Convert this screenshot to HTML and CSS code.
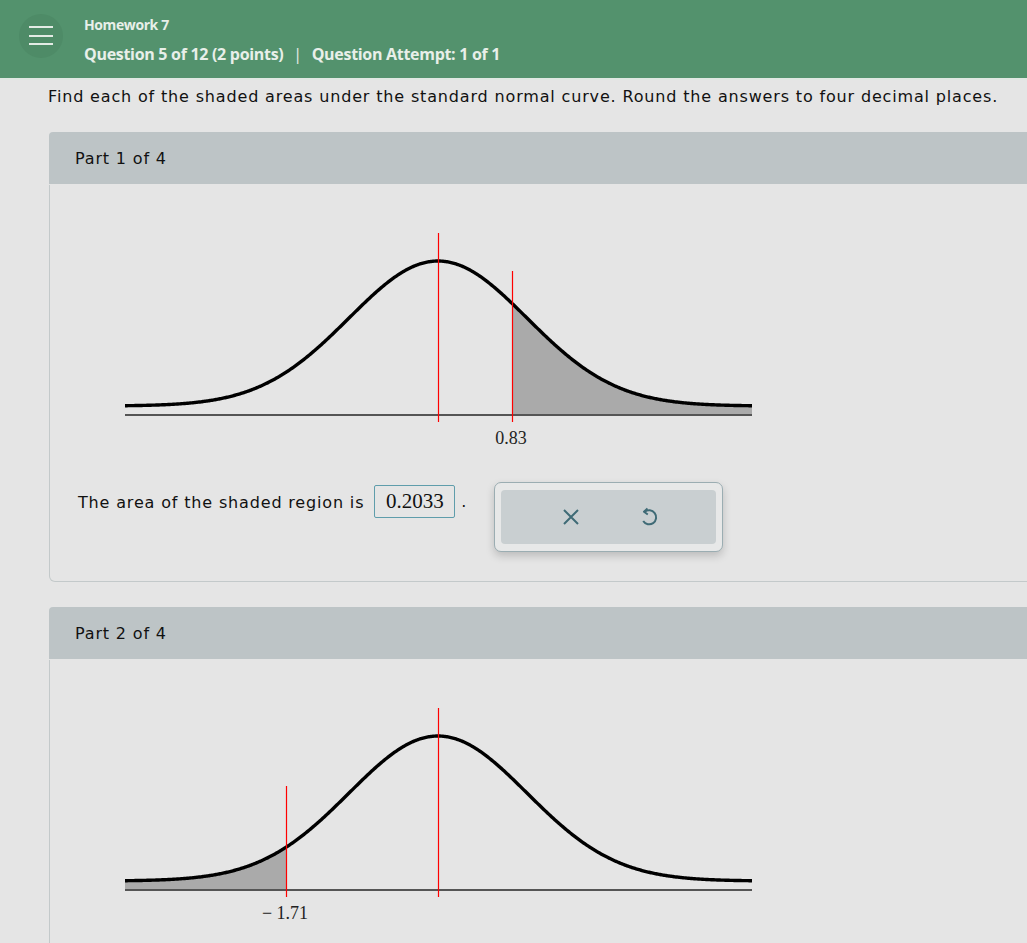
FILE: index.html
```html
<!DOCTYPE html>
<html lang="en">
<head>
    <title>Homework 7</title>
    <link rel="stylesheet" href="styles.css">
</head>
<body>
    <div class="top-bar">
        <button class="menu-button">
            <span class="menu-line"></span>
            <span class="menu-line"></span>
            <span class="menu-line"></span>
        </button>
        <div class="title-area">
            <div class="hw-name">Homework 7</div>
            <div class="question-info">Question 5 of 12 (2 points) <span class="divider">|</span> Question Attempt: 1 of 1</div>
        </div>
    </div>

    <div class="content">
        <p class="question-text">Find each of the shaded areas under the standard normal curve. Round the answers to four decimal places.</p>

        <div class="part-card">
            <div class="part-header">Part 1 of 4</div>
            <div class="part-body">
                <svg class="graph" width="760" height="270" id="graph1" data-z="0.83" data-side="right" data-line-top="86"></svg>
                <div class="answer-row">
                    <span class="answer-label">The area of the shaded region is</span>
                    <span class="answer-box">0.2033</span>
                    <span class="answer-dot">.</span>
                    <div class="tool-box">
                        <div class="tool-inner">
                            <svg width="20" height="20" viewBox="0 0 20 20">
                                <path d="M3 3 L17 17 M17 3 L3 17" stroke="#3f6b76" stroke-width="2" fill="none"/>
                            </svg>
                            <svg width="20" height="22" viewBox="0 0 20 22">
                                <path d="M8.5 2.5 L5 5.8 L8.8 8.5" stroke="#3f6b76" stroke-width="2" fill="none" stroke-linejoin="round"/>
                                <path d="M5.6 6 A7 7 0 1 1 4.2 15" stroke="#3f6b76" stroke-width="2" fill="none"/>
                            </svg>
                        </div>
                    </div>
                </div>
            </div>
        </div>

        <div class="part-card">
            <div class="part-header">Part 2 of 4</div>
            <div class="part-body">
                <svg class="graph" width="760" height="270" id="graph2" data-z="-1.71" data-side="left" data-line-top="126"></svg>
            </div>
        </div>
    </div>

    <script>
        // draws the normal curve, shaded tail and red markers
        var NS = "http://www.w3.org/2000/svg";
        var cx = 388, base = 221, axisY = 230, peak = 145, unit = 89;
        var left = 75, right = 702;

        function curveY(x) {
            var z = (x - cx) / unit;
            return base - peak * Math.exp(-z * z / 2);
        }

        function add(svg, tag, attrs, text) {
            var el = document.createElementNS(NS, tag);
            for (var k in attrs) el.setAttribute(k, attrs[k]);
            if (text) el.textContent = text;
            svg.appendChild(el);
            return el;
        }

        function drawGraph(id) {
            var svg = document.getElementById(id);
            var z = parseFloat(svg.getAttribute("data-z"));
            var side = svg.getAttribute("data-side");
            var lineTop = svg.getAttribute("data-line-top");
            var zx = Math.round(cx + z * unit);

            var a = side == "right" ? zx : left;
            var b = side == "right" ? right : zx;
            var shade = "M" + a + " " + axisY;
            for (var x = a; x <= b; x++) shade += " L" + x + " " + curveY(x).toFixed(2);
            shade += " L" + b + " " + axisY + " Z";
            add(svg, "path", { d: shade, fill: "#aaaaaa" });

            var curve = "M" + left + " " + curveY(left).toFixed(2);
            for (var x = left + 1; x <= right; x++) curve += " L" + x + " " + curveY(x).toFixed(2);
            add(svg, "path", { d: curve, fill: "none", stroke: "#000", "stroke-width": 3.4 });

            add(svg, "line", { x1: left, y1: axisY, x2: right, y2: axisY, stroke: "#555", "stroke-width": 1.8 });
            add(svg, "line", { x1: cx + 0.5, y1: 48, x2: cx + 0.5, y2: 237, stroke: "#ff0000", "stroke-width": 1.2 });
            add(svg, "line", { x1: zx + 0.5, y1: lineTop, x2: zx + 0.5, y2: 237, stroke: "#ff0000", "stroke-width": 1.2 });

            var label = z < 0 ? "\u2212 " + Math.abs(z).toFixed(2) : z.toFixed(2);
            add(svg, "text", { x: zx - 1, y: 259, "text-anchor": "middle", class: "tick-label" }, label);
        }

        drawGraph("graph1");
        drawGraph("graph2");
    </script>
</body>
</html>
```

FILE: styles.css
```css
* {
    box-sizing: border-box;
}

body {
    margin: 0;
    background: #e5e5e5;
    font-family: "DejaVu Sans", sans-serif;
    color: #111;
    overflow: hidden;
}

.top-bar {
    height: 80px;
    background: #53926d;
    border-bottom: 2px solid #dfe8e2;
    display: flex;
    align-items: center;
}

.menu-button {
    width: 44px;
    height: 44px;
    margin-left: 19px;
    margin-top: -7px;
    border: 0;
    border-radius: 50%;
    background: #4e8b67;
    display: flex;
    flex-direction: column;
    justify-content: center;
    align-items: center;
    gap: 6.5px;
    padding: 0;
}

.menu-line {
    display: block;
    width: 24px;
    height: 2px;
    background: #e3ebe5;
}

.title-area {
    margin-left: 21px;
    margin-top: 2px;
    font-family: "Open Sans", sans-serif;
    color: #e8efe9;
}

.hw-name {
    font-size: 14px;
    font-weight: 700;
    letter-spacing: -0.4px;
    line-height: 18px;
}

.question-info {
    margin-top: 10px;
    font-size: 16px;
    font-weight: 700;
    letter-spacing: -0.3px;
    line-height: 20px;
}

.divider {
    font-weight: 400;
    margin: 0 6px;
}

.content {
    padding-left: 49px;
    margin-right: -30px;
    letter-spacing: 0.84px;
}

.question-text {
    margin: 8px 0 0 -1px;
    font-size: 16px;
    line-height: 18px;
}

.part-card {
    margin-top: 25px;
}

.part-card:first-of-type {
    margin-top: 26px;
}

.part-header {
    height: 52px;
    background: #bdc4c6;
    border-radius: 4px 0 0 0;
    padding-left: 26px;
    display: flex;
    align-items: center;
    font-size: 16px;
}

.part-body {
    border: 1px solid #c3c9ca;
    border-top: 0;
    border-radius: 0 0 0 6px;
    height: 397px;
}

.graph {
    display: block;
    margin-top: 1px;
}

.tick-label {
    font-family: "Liberation Serif", serif;
    font-size: 18px;
    letter-spacing: 0;
    fill: #222;
}

.answer-row {
    display: flex;
    align-items: flex-start;
    margin-top: 27px;
    padding-left: 28px;
}

.answer-label {
    margin-top: 11px;
    font-size: 16px;
}

.answer-box {
    margin-left: 10px;
    margin-top: 3px;
    width: 81px;
    height: 33px;
    border: 1px solid #5f9dab;
    border-radius: 2px;
    font-family: "Liberation Serif", serif;
    font-size: 21px;
    letter-spacing: 0;
    display: flex;
    align-items: center;
    justify-content: center;
}

.answer-dot {
    margin-left: 6px;
    margin-top: 10px;
    font-size: 16px;
}

.tool-box {
    margin-left: 27px;
    width: 229px;
    height: 70px;
    border: 1px solid #9badb2;
    border-radius: 7px;
    background: #e7e8e8;
    box-shadow: 0 4px 8px rgba(0, 0, 0, 0.18);
    padding: 7px 6px 7px 6px;
}

.tool-inner {
    height: 100%;
    background: #c9cfd1;
    border-radius: 4px;
    display: flex;
    align-items: center;
    justify-content: space-around;
    padding: 0 28px 0 30px;
}
```
